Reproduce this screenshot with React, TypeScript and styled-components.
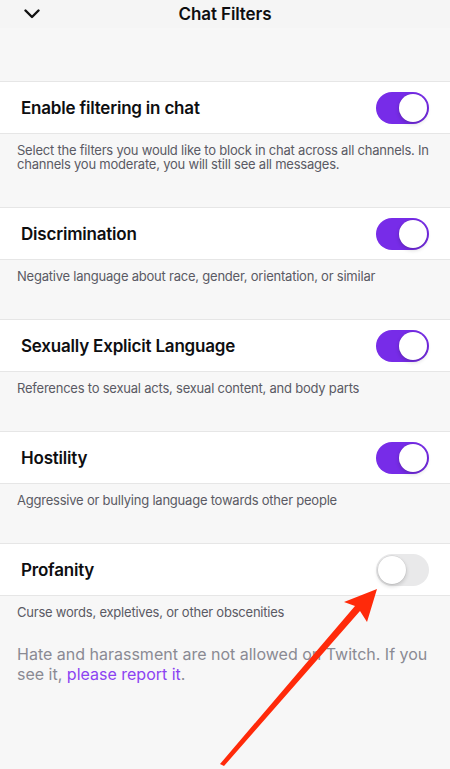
import styled, { createGlobalStyle } from "styled-components";

const GlobalStyle = createGlobalStyle`
    html, body {
        margin: 0;
        padding: 0;
        background: #f7f7f7;
    }
    body {
        font-family: Inter, "Noto Sans", "Liberation Sans", sans-serif;
        color: #0e0e10;
    }
`;

const Screen = styled.div`
    position: relative;
    width: 450px;
    height: 769px;
    overflow: hidden;
    background: #f7f7f7;
`;

const Header = styled.div`
    height: 28px;
    display: grid;
    grid-template-columns: 60px 1fr 60px;
    align-items: center;
    background: #f5f5f5;
`;

const BackButton = styled.button`
    border: none;
    background: none;
    padding: 0 0 0 24px;
    display: flex;
    align-items: center;
    color: #111;
`;

const Title = styled.h1`
    margin: 0;
    text-align: center;
    font-size: 17px;
    font-weight: 600;
    letter-spacing: -0.1px;
`;

const List = styled.div`
    margin-top: 53px;
    display: flex;
    flex-direction: column;
    gap: 36px;
`;

const Row = styled.div`
    box-sizing: border-box;
    height: 53px;
    background: #fff;
    border-top: 1px solid #e6e6e6;
    border-bottom: 1px solid #e6e6e6;
    display: flex;
    align-items: center;
    justify-content: space-between;
    padding: 0 21px;
`;

const RowLabel = styled.span`
    font-size: 17px;
    font-weight: 600;
    letter-spacing: -0.2px;
`;

const Description = styled.p`
    margin: 0;
    padding: 9px 12px 0 17px;
    font-size: 13px;
    line-height: 14px;
    letter-spacing: -0.22px;
    color: #5a5a64;
`;

const Track = styled.span<{ $on: boolean }>`
    position: relative;
    width: 53px;
    height: 32px;
    border-radius: 16px;
    background: ${(p) => (p.$on ? "#772ce8" : "#e9e9ea")};
    flex-shrink: 0;
    margin-right: 0;
`;

const Knob = styled.span<{ $on: boolean }>`
    position: absolute;
    top: 2px;
    left: ${(p) => (p.$on ? "23px" : "2px")};
    width: 28px;
    height: 28px;
    border-radius: 50%;
    background: #fff;
    box-shadow: 0 2px 4px rgba(0, 0, 0, 0.18), 0 0 0 0.5px rgba(0, 0, 0, 0.08);
`;

const Footer = styled.p`
    margin: 25px 0 0;
    padding: 0 17px;
    font-size: 16px;
    line-height: 20px;
    color: #8a8a93;
`;

const Link = styled.a`
    color: #8c43f2;
    text-decoration: none;
`;

const Arrow = styled.svg`
    position: absolute;
    left: 0;
    top: 0;
    pointer-events: none;
`;

interface IToggleProps {
    on: boolean;
}

const Toggle = ({ on }: IToggleProps) => (
    <Track $on={on}>
        <Knob $on={on} />
    </Track>
);

const filters = [
    {
        label: "Enable filtering in chat",
        text: "Select the filters you would like to block in chat across all channels. In channels you moderate, you will still see all messages.",
        on: true,
    },
    {
        label: "Discrimination",
        text: "Negative language about race, gender, orientation, or similar",
        on: true,
    },
    {
        label: "Sexually Explicit Language",
        text: "References to sexual acts, sexual content, and body parts",
        on: true,
    },
    {
        label: "Hostility",
        text: "Aggressive or bullying language towards other people",
        on: true,
    },
    {
        label: "Profanity",
        text: "Curse words, expletives, or other obscenities",
        on: false,
    },
];

const App = () => {
    return (
        <Screen>
            <GlobalStyle />
            <Header>
                <BackButton>
                    <svg width="16" height="10" viewBox="0 0 16 10" fill="none">
                        <path d="M1.5 1.5 L8 8 L14.5 1.5" stroke="#111" strokeWidth="2.4" strokeLinecap="round" strokeLinejoin="round" />
                    </svg>
                </BackButton>
                <Title>Chat Filters</Title>
                <span />
            </Header>
            <List>
                {filters.map((f) => (
                    <div key={f.label}>
                        <Row>
                            <RowLabel>{f.label}</RowLabel>
                            <Toggle on={f.on} />
                        </Row>
                        <Description>{f.text}</Description>
                    </div>
                ))}
            </List>
            <Footer>
                Hate and harassment are not allowed on Twitch. If you see it, <Link href="#">please report it</Link>.
            </Footer>
            {/* red callout pointing at the profanity switch */}
            <Arrow width="450" height="769" viewBox="0 0 450 769">
                <path d="M220 764 L224 766 L360 611 L367 622 L377 589 L344 602 L355 606 Z" fill="#ff2a0a" />
            </Arrow>
        </Screen>
    );
};

export default App;
